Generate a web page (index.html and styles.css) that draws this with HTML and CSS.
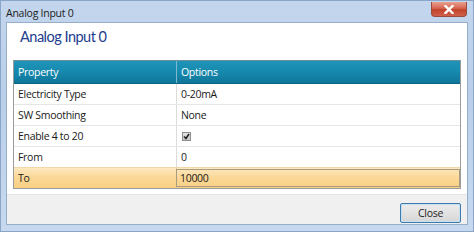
FILE: index.html
```html
<!DOCTYPE html>
<html>
<head>
<meta charset="utf-8">
<link rel="stylesheet" href="styles.css">
</head>
<body>
<div class="window">
  <div class="titlebar">
    <span class="title">Analog Input 0</span>
    <div class="close-x">
      <svg width="10" height="9" viewBox="0 0 10 9"><path d="M1.5 1 L8.5 8 M8.5 1 L1.5 8" stroke="#fff" stroke-width="2.4" stroke-linecap="square"/></svg>
    </div>
  </div>
  <div class="client">
    <div class="heading">Analog Input 0</div>
    <div class="grid">
      <div class="row head"><div class="cell c1">Property</div><div class="cell c2">Options</div></div>
      <div class="row"><div class="cell c1">Electricity Type</div><div class="cell c2">0-20mA</div></div>
      <div class="row"><div class="cell c1">SW Smoothing</div><div class="cell c2">None</div></div>
      <div class="row"><div class="cell c1">Enable 4 to 20</div><div class="cell c2"><span class="check"><svg width="7" height="7" viewBox="0 0 7 7"><path d="M1 3.5 L3 5.5 L6 1" stroke="#222" stroke-width="1.6" fill="none"/></svg></span></div></div>
      <div class="row"><div class="cell c1">From</div><div class="cell c2">0</div></div>
      <div class="row sel"><div class="cell c1">To</div><div class="cell c2"><span class="edit">10000</span></div></div>
    </div>
    <div class="spacer"></div>
    <div class="footer"><button class="btn">Close</button></div>
  </div>
</div>
</body>
</html>
```
FILE: styles.css
```css
html, body { margin: 0; padding: 0; }
body { width: 474px; height: 232px; overflow: hidden; font-family: "Open Sans", "Lato", sans-serif; }
.window {
  width: 474px; height: 232px; box-sizing: border-box;
  background: linear-gradient(#c3d6ed, #b9cfe9 40%, #c6d9ef);
  border: 1px solid #8aa5c8;
  display: flex; flex-direction: column;
}
.titlebar {
  height: 21px; display: flex; justify-content: space-between; align-items: flex-start;
  padding-left: 5px;
}
.title { font-size: 10.5px; letter-spacing: -0.25px; color: #1b1b1b; line-height: 14px; margin-top: 5px; }
.close-x {
  width: 36px; height: 15px; margin-right: 6px; margin-top: 1px;
  background: linear-gradient(#e8a08f, #d56650 45%, #c2442c 55%, #d0604a);
  border: 1px solid #9b4a3c; border-top: none; border-radius: 0 0 4px 4px;
  box-sizing: border-box; display: flex; align-items: center; justify-content: center;
}
.client {
  flex: 1; margin: 0 5px 6px 5px; background: #fff;
  border: 1px solid #97aecb;
  display: flex; flex-direction: column;
}
.heading {
  height: 37px; box-sizing: border-box; padding: 5px 0 0 13px;
  font-family: "Lato", sans-serif;
  font-size: 14.5px; letter-spacing: -0.5px; color: #223c8e;
}
.grid {
  margin: 0 6px 0 6px; border: 1px solid #9c9c9c; border-top-color: #6f8fa0;
  font-size: 10.5px; letter-spacing: -0.3px; color: #1a1a1a;
}
.row { display: flex; height: 20px; border-top: 1px solid #e6e6e6; }
.row:nth-child(2) { border-top: none; }
.row.head {
  height: 22px; border-top: none;
  background: linear-gradient(#1f93b8, #1689ae 50%, #0f7698);
  color: #fff; border-bottom: 1px solid #0c6485;
}
.cell { display: flex; align-items: center; box-sizing: border-box; padding-left: 4px; }
.c1 { width: 163px; border-right: 1px solid #dcdcdc; }
.head .c1 { border-right: 1px solid #7cbad0; }
.c2 { flex: 1; }
.row.sel { background: linear-gradient(#fde8c0, #fbd795 50%, #f9d085); border-top-color: #f0d8a8; }
.sel .c1 { border-right-color: #e0c89a; }
.sel .c2 { padding: 1px 0 1px 0; }
.edit {
  flex: 1; height: 100%; box-sizing: border-box; border: 1px solid #a99b80;
  display: flex; align-items: center; padding-left: 3px; margin-left: -1px;
}
.check {
  width: 9px; height: 9px; box-sizing: border-box; border: 1px solid #8e8e8e;
  background: linear-gradient(#e4e4e4, #c9c9c9); display: flex; align-items: center; justify-content: center;
  margin-left: 1px;
}
.spacer { height: 5px; }
.footer {
  flex: 1; background: #f0f0f0; border-top: 1px solid #e4e4e4;
  display: flex; justify-content: flex-end; align-items: flex-start; padding: 8px 6px 0 0;
}
.btn {
  width: 61px; height: 20px; margin: 0; padding: 0;
  font-family: "Open Sans", "Lato", sans-serif; font-size: 10.5px; letter-spacing: -0.3px; color: #1e1e1e;
  border: 1px solid #3d7bad; border-radius: 2px;
  background: linear-gradient(#ececec, #e2e2e2 50%, #d6d6d6);
  box-shadow: inset 0 0 0 1px #c4e0f4;
}
```
